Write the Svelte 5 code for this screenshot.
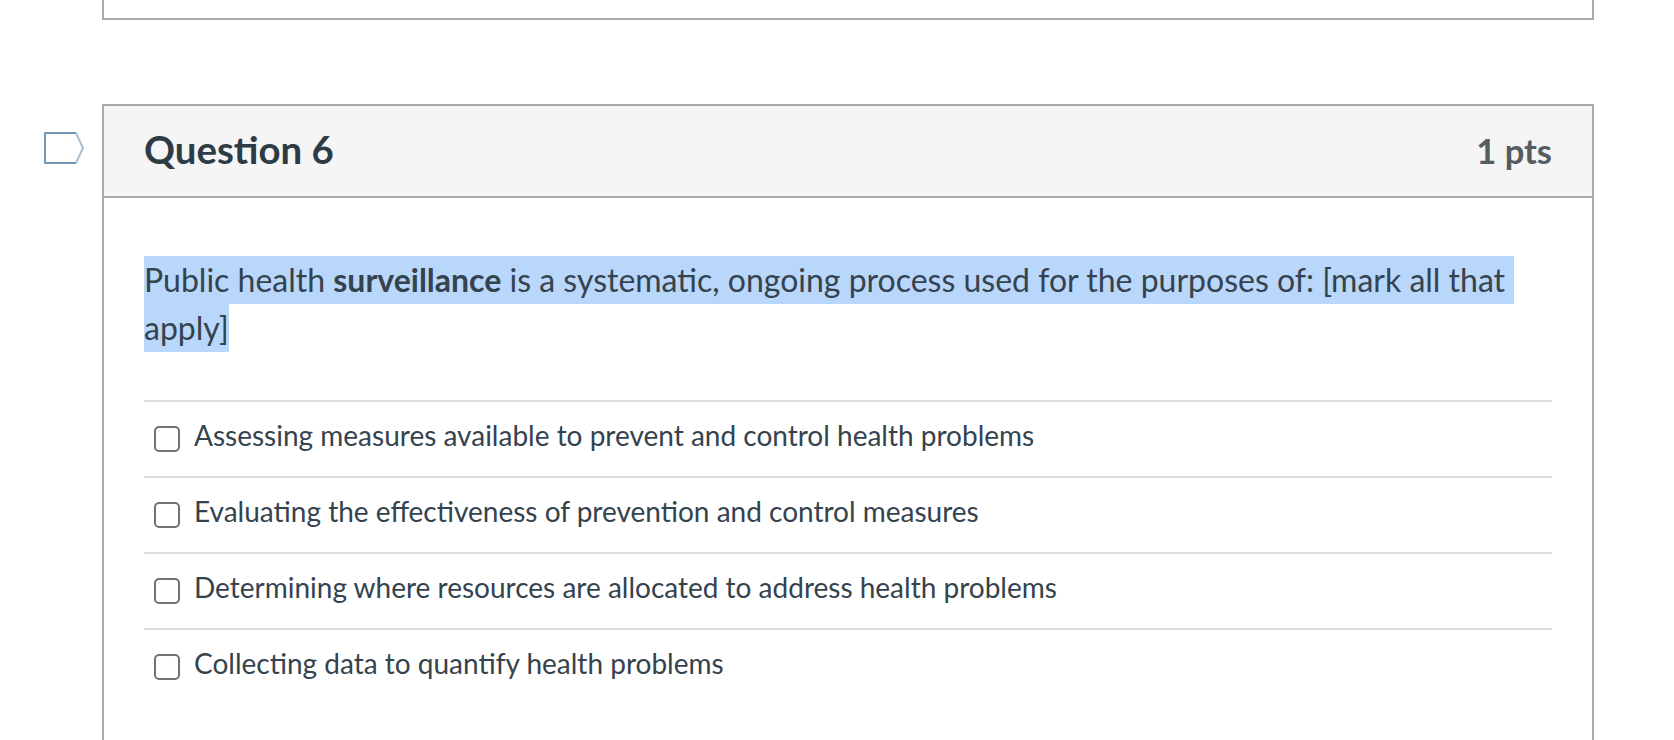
<script>
  const answers = [
    "Assessing measures available to prevent and control health problems",
    "Evaluating the effectiveness of prevention and control measures",
    "Determining where resources are allocated to address health problems",
    "Collecting data to quantify health problems"
  ];
</script>

<div class="page">
  <div class="prev-card"></div>

  <div class="question-row">
    <svg class="flag" width="42" height="34" viewBox="0 0 42 34" aria-hidden="true">
      <path d="M32 1L39 16L32 31" fill="none" stroke="#a9bfd2" stroke-width="2"/>
      <path d="M32 1H1V31H32" fill="none" stroke="#7295b3" stroke-width="2"/>
    </svg>

    <div class="card">
      <div class="header">
        <h2>Question 6</h2>
        <div class="pts">1 pts</div>
      </div>
      <div class="body">
        <div class="prompt">
          <span class="line first">Public health <strong>surveillance</strong> is a systematic, ongoing process used for the purposes of: [mark all that</span>
          <span class="line">apply]</span>
        </div>
        <ul class="answers">
          {#each answers as answer}
            <li>
              <span class="box"></span>
              <span class="text">{answer}</span>
            </li>
          {/each}
        </ul>
      </div>
    </div>
  </div>
</div>

<style>
  :global(body) {
    margin: 0;
    overflow: hidden;
    background: #fff;
  }

  .page {
    height: 740px;
    overflow: hidden;
    font-family: Lato, "Open Sans", sans-serif;
    color: #2d3b45;
    font-variant-ligatures: common-ligatures;
  }

  .prev-card {
    box-sizing: border-box;
    width: 1492px;
    height: 20px;
    margin-left: 102px;
    border: 2px solid #aaa;
    border-top: none;
  }

  .question-row {
    display: flex;
    align-items: flex-start;
    margin-top: 84px;
    padding-left: 44px;
  }

  .flag {
    flex: none;
    margin-top: 28px;
    margin-right: 16px;
  }

  .card {
    box-sizing: border-box;
    flex: none;
    width: 1492px;
    height: 800px;
    border: 2px solid #aaa;
  }

  .header {
    display: flex;
    justify-content: space-between;
    align-items: center;
    box-sizing: border-box;
    height: 92px;
    padding: 0 40px;
    background: #f5f5f5;
    border-bottom: 2px solid #aaa;
  }

  h2 {
    margin: 0 0 4px;
    font-size: 38.4px;
    font-weight: 700;
  }

  .pts {
    margin-bottom: 2px;
    font-size: 34.5px;
    font-weight: 700;
    color: #565c60;
  }

  .body {
    padding: 58px 40px 0;
  }

  .prompt {
    font-size: 32px;
    line-height: 48px;
    color: #34434e;
  }

  .line {
    display: block;
    width: fit-content;
    background: #b9d6fb;
  }

  .line.first {
    padding-right: 9px;
  }

  .answers {
    list-style: none;
    margin: 48px 0 0;
    padding: 0;
  }

  li {
    display: flex;
    align-items: center;
    box-sizing: border-box;
    height: 76px;
    padding-left: 10px;
    font-size: 28px;
    color: #34434e;
    border-top: 2px solid #ddd;
  }

  .text {
    margin-bottom: 8px;
  }

  .box {
    flex: none;
    box-sizing: border-box;
    width: 26px;
    height: 26px;
    margin-right: 14px;
    margin-top: 0;
    border: 2px solid #717171;
    border-radius: 5px;
  }
</style>
